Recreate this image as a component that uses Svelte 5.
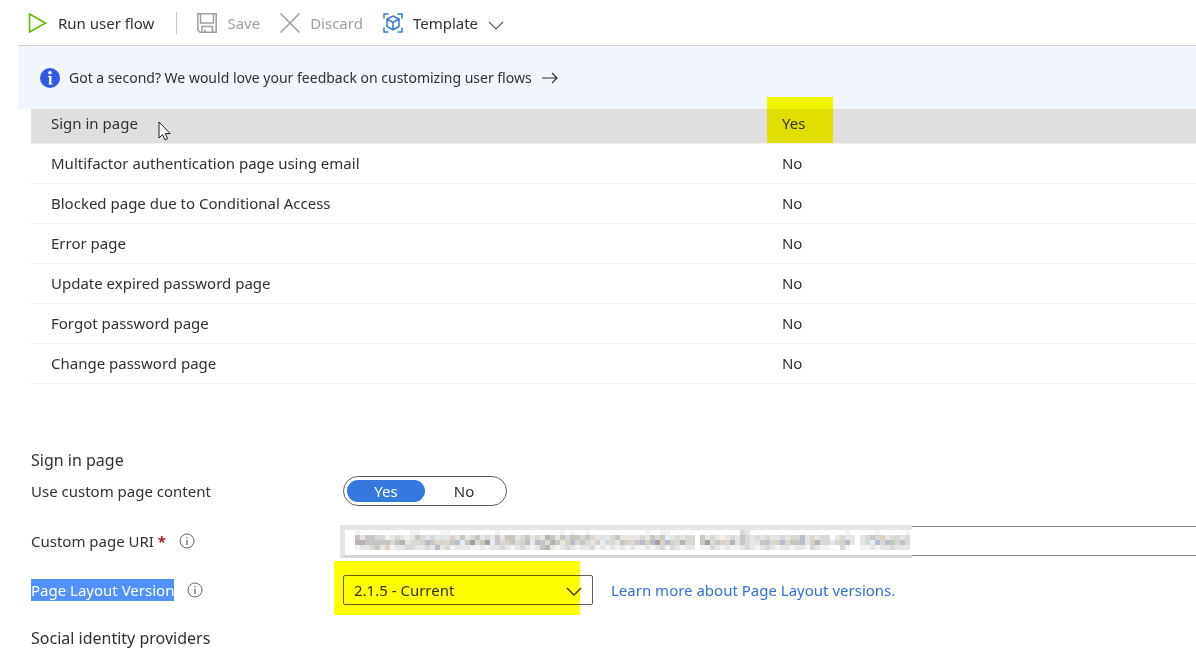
<script>
	const pages = [
		{ name: 'Sign in page', custom: 'Yes' },
		{ name: 'Multifactor authentication page using email', custom: 'No' },
		{ name: 'Blocked page due to Conditional Access', custom: 'No' },
		{ name: 'Error page', custom: 'No' },
		{ name: 'Update expired password page', custom: 'No' },
		{ name: 'Forgot password page', custom: 'No' },
		{ name: 'Change password page', custom: 'No' }
	];

	let selected = $state(0);
	let useCustom = $state('Yes');
	let uri = $state('');
	let version = $state('2.1.5');

	// mosaic laid over the address, one letter per tile
	const tones = {
		a: '#f3f3f2', b: '#e6e6e5', c: '#d8d8d6', d: '#c6c6c5', e: '#b6b3b0', f: '#a39d9c',
		B: '#dbe6ec', P: '#b7bdce', T: '#dfd0c2', G: '#c6c8bd', L: '#e2eff8', M: '#c9bfc0'
	};
	const mosaic = [
		'a..........aa....aa.........a............a.a..a...........a..aa..............cb...................a.....a.....a',
		'MbddccabcbabGcbcbBbTbGbcdbcbdbGdbcdbcbeGbGcGdcGcbBbcGbbbbcbdcGLbcbcc.GbcbabcbdcbcbcbbcbccPbcbcc.bcbb.bcGcTbccbc',
		'eeddddGcMebccTPdcTcGPLGfcGfLdcTdcTPbPGceGbTPcGcbTLccbGTcdPTPfTPTcecc.GfcdTceBGcbBdGcTPcGGPbTeccbcTPb.bcLPcPGcMc',
		'abbcGbTabbccbbcbPbcabbbaababbcbabcbabGebabcbabbcababababaababcacbabb.aacbabaabcbabcbabbabbacbaa..ca..aababbcbbb'
	];
	const tiles = mosaic.flatMap((row, y) =>
		[...row].map((tone, x) => ({ x: x * 5, y: y * 5, fill: tones[tone] })).filter(t => t.fill)
	);
</script>

{#snippet info()}
	<svg class="info" viewBox="0 0 16 16" width="16" height="16" aria-hidden="true">
		<circle cx="8" cy="8" r="7" fill="none" stroke="#605e5c" />
		<path d="M8 7v5M8 4.200v1.300" fill="none" stroke="#605e5c" stroke-width="1.200" />
	</svg>
{/snippet}

<div class="blade">
	<div class="toolbar">
		<button class="run">
			<svg viewBox="0 0 20 20" width="20" height="20" aria-hidden="true">
				<path d="M1.500 1v18L17.500 10z" fill="none" stroke="#6bb700" stroke-width="1.600" />
			</svg>
			Run user flow
		</button>
		<span class="divider"></span>
		<button disabled>
			<svg viewBox="0 0 20 20" width="20" height="20" fill="none" stroke="#a19f9d" stroke-width="1.500" aria-hidden="true">
				<path d="M.8.800h18.400v18.400H3L.8 17zM3.500 1v9h13V1M5 19v-5.500h10.500V19M8 19v-2.500" />
			</svg>
			Save
		</button>
		<button disabled>
			<svg viewBox="0 0 20 20" width="20" height="20" aria-hidden="true">
				<path d="M.5.500l19 19M19.500.500l-19 19" fill="none" stroke="#a19f9d" stroke-width="1.500" />
			</svg>
			Discard
		</button>
		<button class="template">
			<svg viewBox="0 0 20 20" width="20" height="20" fill="none" stroke="#3579de" stroke-width="1.500" aria-hidden="true">
				<path d="M1 5.500V1h4.500M14.500 1H19v4.500M19 14.500V19h-4.500M5.500 19H1v-4.500" />
				<path d="M10 3l6 3v7.500L10 17l-6-3.500V6zM4 6l6 3.300L16 6M10 9.300V17" />
			</svg>
			Template
			<svg class="chevron" viewBox="0 0 16 10" width="16" height="10" aria-hidden="true">
				<path d="M1 1l7 7 7-7" fill="none" stroke="#605e5c" stroke-width="1.200" />
			</svg>
		</button>
	</div>

	<div class="banner">
		<svg viewBox="0 0 20 20" width="20" height="20" aria-hidden="true">
			<circle cx="10" cy="10" r="10" fill="#3159e3" />
			<circle cx="10" cy="4.800" r="1.800" fill="#fff" />
			<path d="M8 8h3.500v7.500h1v1h-4v-1h.500V9H8z" fill="#fff" />
		</svg>
		<a href="#feedback">
			Got a second? We would love your feedback on customizing user flows
			<svg viewBox="0 0 16 12" width="16" height="12" aria-hidden="true">
				<path d="M0 6h15M10 1l5 5-5 5" fill="none" stroke="#323130" stroke-width="1.200" />
			</svg>
		</a>
	</div>

	<div class="content">
		<table>
			<tbody>
				{#each pages as page, i}
					<tr class:selected={i === selected} onclick={() => (selected = i)}>
						<td class="name">
							{page.name}
							{#if i === 0}
								<svg class="pointer" viewBox="0 0 13 20" width="13" height="20" aria-hidden="true">
									<path d="M1 1v16l3.600-3.500L7 18.800l2.600-1.100-2.300-5.100h4.900z" fill="#fff" stroke="#1b1a2b" />
								</svg>
							{/if}
						</td>
						<td class="custom">
							{page.custom}
							{#if i === 0}<span class="marker"></span>{/if}
						</td>
					</tr>
				{/each}
			</tbody>
		</table>

		<h2>Sign in page</h2>
		<div class="row toggle-row">
			<span id="custom-label">Use custom page content</span>
			<div class="toggle" role="radiogroup" aria-labelledby="custom-label">
				{#each ['Yes', 'No'] as option}
					<label class:on={useCustom === option}>
						<input type="radio" name="custom" value={option} bind:group={useCustom} />
						{option}
					</label>
				{/each}
			</div>
		</div>
		<div class="row uri-row">
			<div class="caption">
				<label for="uri">Custom page URI <b>*</b></label>
				{@render info()}
			</div>
			<div class="uri">
				<input id="uri" type="text" bind:value={uri} />
				<div class="redacted">
					<svg viewBox="0 0 555 20" width="555" height="20" shape-rendering="crispEdges" aria-hidden="true">
						{#each tiles as tile}
							<rect x={tile.x} y={tile.y} width="5" height="5" fill={tile.fill} />
						{/each}
					</svg>
				</div>
			</div>
		</div>
		<div class="row">
			<div class="caption">
				<label class="picked" for="version">Page Layout Version</label>
				{@render info()}
			</div>
			<div class="version">
				<div class="dropdown">
					<select id="version" bind:value={version}>
						<option value="2.1.5">2.1.5 - Current</option>
					</select>
					<svg viewBox="0 0 16 10" width="16" height="10" aria-hidden="true">
						<path d="M1 1l7 7 7-7" fill="none" stroke="#323130" stroke-width="1.300" />
					</svg>
					<span class="marker"></span>
				</div>
				<a href="#versions">Learn more about Page Layout versions.</a>
			</div>
		</div>
		<h2 class="providers">Social identity providers</h2>
	</div>
</div>

<style>
	:global(body) {
		background: #fff;
		overflow: hidden;
	}
	.blade {
		padding-left: 18px;
		font-family: "Noto Sans", "Open Sans", sans-serif;
		font-size: 15px;
		line-height: 22px;
		color: #323130;
	}
	button, input, select {
		font: inherit;
		color: inherit;
	}
	svg {
		flex: none;
	}
	.toolbar {
		display: flex;
		align-items: center;
		height: 45px;
		padding-left: 10px;
		border-bottom: 1px solid #d2d0ce;
	}
	.toolbar button {
		display: flex;
		align-items: center;
		gap: 10px;
		margin-right: 20px;
		padding: 0;
		border: 0;
		background: none;
		white-space: nowrap;
	}
	.toolbar .run {
		margin-right: 22px;
	}
	.toolbar button:disabled {
		color: #a19f9d;
	}
	.toolbar .chevron {
		margin-top: 6px;
	}
	.divider {
		width: 1px;
		height: 22px;
		margin-right: 20px;
		background: #c8c6c4;
	}
	.banner {
		display: flex;
		align-items: center;
		gap: 9px;
		height: 63px;
		padding-left: 22px;
		background: #f1f5fe;
		font-size: 14px;
	}
	.banner a {
		display: flex;
		align-items: center;
		gap: 10px;
		color: inherit;
		text-decoration: none;
	}
	.content {
		padding-left: 13px;
	}
	table {
		width: 100%;
		table-layout: fixed;
		border-collapse: separate;
		border-spacing: 0;
	}
	td {
		position: relative;
		height: 37px;
		padding: 0 0 2px;
		border-bottom: 1px solid #f0efee;
	}
	tr:first-child td {
		height: 28px;
		padding-bottom: 6px;
	}
	td.name {
		width: 63%;
		padding-left: 20px;
		box-sizing: border-box;
	}
	td.custom {
		padding-left: 17px;
	}
	.selected td {
		background: #e0dfdd;
		background-clip: padding-box;
	}
	.pointer {
		position: absolute;
		left: 127px;
		top: 12px;
	}
	.marker {
		position: absolute;
		background: #ff0;
		mix-blend-mode: multiply;
		pointer-events: none;
	}
	td .marker {
		left: 2px;
		top: -12px;
		width: 66px;
		height: 46px;
	}
	h2 {
		margin: 64px 0 0;
		font-size: 16px;
		font-weight: 400;
		line-height: 24px;
	}
	.row {
		display: grid;
		grid-template-columns: 312px 1fr;
		align-items: center;
	}
	.toggle-row {
		margin-top: 4px;
	}
	.uri-row {
		margin: 20px 0 19px;
	}
	.caption {
		display: flex;
		align-items: center;
		gap: 13px;
	}
	.caption b {
		color: #a4262c;
	}
	.picked {
		background: #5290fc;
		color: #fff;
	}
	.toggle {
		display: flex;
		justify-self: start;
		padding: 3px;
		border: 1px solid #605e5c;
		border-radius: 15px;
	}
	.toggle label {
		width: 78px;
		border-radius: 11px;
		text-align: center;
	}
	.toggle .on {
		background: #3579de;
		color: #fff;
	}
	.toggle input {
		position: absolute;
		opacity: 0;
		margin: 0;
	}
	.uri {
		position: relative;
	}
	.uri input {
		display: block;
		box-sizing: border-box;
		width: 100%;
		height: 30px;
		padding: 0 10px;
		border: 1px solid #808080;
		border-right: 0;
		border-radius: 2px 0 0 2px;
	}
	.redacted {
		position: absolute;
		left: -3px;
		top: -1px;
		box-sizing: border-box;
		width: 572px;
		height: 33px;
		padding-left: 10px;
		border: solid #e6e6e4;
		border-width: 5px 0 3px 5px;
		border-bottom-color: #d6d6d6;
		background: #fff;
	}
	.redacted svg {
		display: block;
	}
	.version {
		display: flex;
		align-items: center;
		gap: 18px;
	}
	.dropdown {
		position: relative;
		width: 250px;
	}
	.dropdown select {
		display: block;
		width: 100%;
		height: 30px;
		padding: 0 10px;
		border: 1px solid #605e5c;
		border-radius: 2px;
		background: #fff;
		appearance: none;
	}
	.dropdown svg {
		position: absolute;
		right: 11px;
		top: 12px;
		pointer-events: none;
	}
	.dropdown .marker {
		left: -9px;
		top: -14px;
		width: 246px;
		height: 54px;
	}
	.version a {
		color: #3370d6;
		text-decoration: none;
	}
	.providers {
		margin-top: 21px;
	}
</style>
